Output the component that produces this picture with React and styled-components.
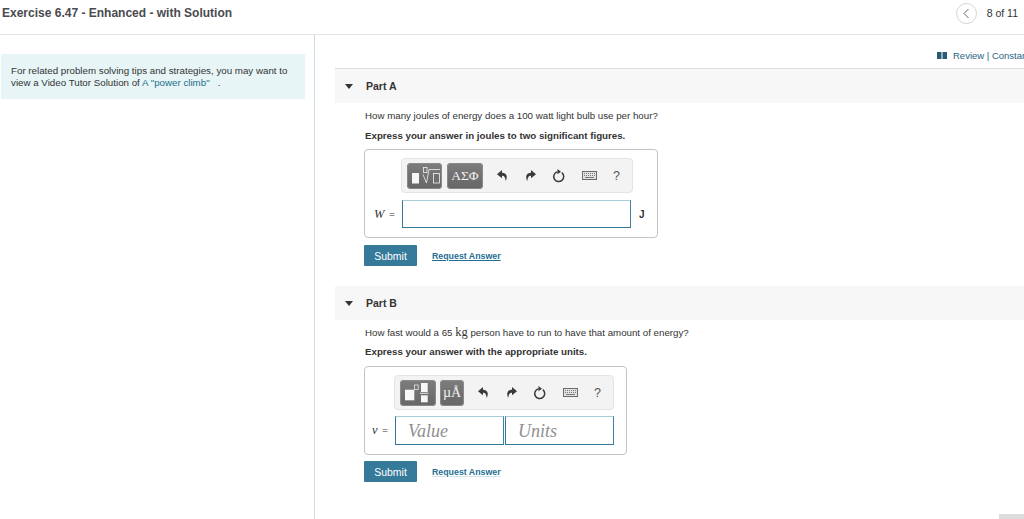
import React from "react";
import styled, { createGlobalStyle } from "styled-components";

const GlobalStyle = createGlobalStyle`
  html, body {
    margin: 0;
    padding: 0;
    height: 100%;
    overflow: hidden;
    background: #fff;
    font-family: "Liberation Sans", Arial, sans-serif;
  }
  * { box-sizing: border-box; }
`;

const Page = styled.div`
  position: relative;
  width: 1024px;
  height: 519px;
  overflow: hidden;
  display: flex;
  flex-direction: column;
`;

const Header = styled.header`
  height: 35px;
  flex-shrink: 0;
  display: flex;
  align-items: center;
  justify-content: space-between;
  padding: 0 6px 8px 2px;
  border-bottom: 1px solid #e3e5e8;
`;

const Title = styled.h1`
  margin: 0;
  font-size: 12px;
  font-weight: 700;
  color: #4a4a4f;
`;

const Pager = styled.div`
  display: flex;
  align-items: center;
  gap: 10px;
  font-size: 10.5px;
  color: #333;
`;

const BackButton = styled.div`
  width: 21px;
  height: 21px;
  border: 1px solid #d4d4d4;
  border-radius: 50%;
  display: flex;
  align-items: center;
  justify-content: center;
`;

const Body = styled.div`
  flex: 1;
  display: flex;
`;

const Sidebar = styled.aside`
  width: 315px;
  flex-shrink: 0;
  padding: 19px 9px 0 1px;
  border-right: 1px solid #ccdbe4;
`;

const InfoBox = styled.div`
  height: 45px;
  padding: 11px 10px 0 10px;
  background: #e7f5f6;
  font-size: 9.75px;
  line-height: 12px;
  white-space: nowrap;
  color: #333;
`;

const InfoLink = styled.span`
  color: #1e6f8e;
`;

const Main = styled.main`
  flex: 1;
  min-width: 0;
  padding-left: 20px;
  overflow: hidden;
`;

const ReviewRow = styled.div`
  height: 34px;
  padding: 15px 0 0 602px;
  display: flex;
  align-items: flex-start;
  gap: 6px;
  white-space: nowrap;
  font-size: 9.5px;
  line-height: 12px;
  color: #2a6480;
  border-bottom: 1px solid #dedede;

  svg {
    flex-shrink: 0;
    margin-top: 2px;
  }
`;

const PartBar = styled.div`
  height: 34px;
  display: flex;
  align-items: center;
  gap: 13px;
  padding-left: 10px;
  background: #f7f7f7;
  font-size: 10.5px;
  font-weight: 700;
  color: #333;
`;

const Caret = styled.span`
  width: 0;
  height: 0;
  border-left: 4.5px solid transparent;
  border-right: 4.5px solid transparent;
  border-top: 5px solid #333;
`;

const PartBody = styled.section`
  padding-left: 29px;
  height: ${(p) => p.$height}px;
`;

const Question = styled.p`
  margin: 0;
  padding: ${(p) => p.$top}px 0 0 1px;
  font-size: 9.73px;
  line-height: 12px;
  color: #333;
`;

const Unit = styled.span`
  font-family: "Liberation Serif", serif;
  font-size: 12.5px;
`;

const Instruction = styled.p`
  margin: 0;
  padding: ${(p) => p.$top}px 0 0 1px;
  font-size: 9.72px;
  line-height: 12px;
  font-weight: 700;
  color: #333;
`;

const AnswerCard = styled.div`
  width: ${(p) => p.$width}px;
  height: 89px;
  margin-top: ${(p) => p.$top}px;
  padding-top: 8px;
  border: 1px solid #c4c4c4;
  border-radius: 4px;
`;

const Toolbar = styled.div`
  width: ${(p) => p.$width}px;
  height: 35px;
  margin-left: ${(p) => p.$left}px;
  padding: 3px 5px;
  display: flex;
  align-items: center;
  background: #f3f3f3;
  border: 1px solid #e4e4e4;
  border-radius: 4px;
`;

const ToolGroup = styled.div`
  display: flex;
  gap: ${(p) => p.$gap}px;
`;

const TemplateButton = styled.div`
  width: ${(p) => p.$width}px;
  height: 26px;
  display: flex;
  align-items: center;
  justify-content: center;
  border-radius: 4px;
  background: linear-gradient(#7d7d7d, #666);
  box-shadow: inset 0 0 0 1px #8a8a8a;
  color: #f2f2f2;
  font-family: "Liberation Serif", serif;
  font-size: ${(p) => p.$size || 13}px;
`;

const ToolIcons = styled.div`
  flex: 1;
  display: flex;
  align-items: center;
  justify-content: space-between;
  padding: 0 7px 0 14px;
`;

const HelpMark = styled.span`
  font-size: 12.5px;
  color: #555;
`;

const InputRow = styled.div`
  display: flex;
  align-items: center;
  margin-top: ${(p) => p.$top}px;
`;

const VarLabel = styled.div`
  width: ${(p) => p.$width}px;
  padding-right: 7px;
  flex-shrink: 0;
  text-align: right;
  white-space: nowrap;
  word-spacing: 2px;
  font-family: "Liberation Serif", serif;
  font-size: 10.5px;
  color: #333;

  i { font-size: 12.5px; }
`;

const MathInput = styled.div`
  width: ${(p) => p.$width}px;
  height: ${(p) => p.$height}px;
  margin-right: ${(p) => p.$gap || 0}px;
  padding: 2px 0 0 12px;
  display: flex;
  align-items: center;
  border: 1px solid #2f7a99;
  border-top-color: #a9cbd8;
  border-right-color: #3d82a0;
  font-family: "Liberation Serif", serif;
  font-style: italic;
  font-size: 18px;
  color: #8f8f8f;
`;

const UnitLabel = styled.div`
  margin-left: 8px;
  font-size: 10px;
  font-weight: 700;
  color: #333;
`;

const ActionRow = styled.div`
  display: flex;
  align-items: center;
  gap: 15px;
  margin-top: ${(p) => p.$top}px;
`;

const SubmitButton = styled.button`
  width: 53px;
  height: 21px;
  padding: 0;
  border: 0;
  border-radius: 1px;
  background: #357a98;
  color: #fff;
  font-family: inherit;
  font-size: 10.5px;
`;

const RequestLink = styled.a`
  font-size: 8.8px;
  font-weight: 700;
  color: #1f6f93;
  text-decoration: underline;
  text-decoration-color: ${(p) => (p.$faint ? "#d4e4ec" : "#1f6f93")};
`;

const ScrollThumb = styled.div`
  position: absolute;
  right: 0;
  bottom: 0;
  width: 25px;
  height: 5px;
  background: #dcdcdc;
`;

const BackIcon = () => (
  <svg width="9" height="11" viewBox="0 0 9 11" fill="none" stroke="#666" strokeWidth="1">
    <path d="M6.5 1 L2 5.5 L6.5 10" />
  </svg>
);

const BookIcon = () => (
  <svg width="10" height="7" viewBox="0 0 10 7" fill="#2a5a78">
    <rect x="0" y="0" width="4.5" height="7" />
    <rect x="5.5" y="0" width="4.5" height="7" />
  </svg>
);

const UndoIcon = ({ flip }) => (
  <svg width="11" height="11" viewBox="0 0 11 10" fill="#3a3a3a" preserveAspectRatio="none" style={flip ? { transform: "scaleX(-1)" } : undefined}>
    <path d="M5 0 L0 3.8 L5 7.4 L5 5.2 C7.2 5 8.2 6.4 8.8 10 C10.8 5.8 9.8 2.4 5 2.4 Z" />
  </svg>
);

const ResetIcon = () => (
  <svg width="13" height="14" viewBox="0 0 13 14" fill="none">
    <path d="M9.8 3.6 A5 5 0 1 1 5.5 2.7" stroke="#3a3a3a" strokeWidth="1.5" />
    <path d="M5.5 0 L9 2.7 L5.5 5.2 Z" fill="#3a3a3a" />
  </svg>
);

const KeyboardIcon = () => (
  <svg width="15" height="9" viewBox="0 0 15 9" fill="none">
    <rect x="0.5" y="0.5" width="14" height="8" fill="#e4e4e4" stroke="#6a6a6a" />
    <path d="M2 2.5 H13 M2 4.5 H13" stroke="#777" strokeDasharray="1 1" />
    <path d="M3 6.5 H12" stroke="#777" />
  </svg>
);

const RootIcon = () => (
  <svg width="35" height="26" viewBox="0 0 35 26" fill="none" stroke="#f2f2f2" strokeWidth="0.8">
    <rect x="5" y="10" width="7" height="10.5" fill="#f7f7f7" stroke="none" />
    <rect x="16.5" y="4.5" width="3.5" height="5" />
    <path d="M16 11.5 L19.5 20 L22 6.5 H33" />
    <rect x="26.5" y="10.5" width="6" height="9.5" />
  </svg>
);

const FractionIcon = () => (
  <svg width="36" height="26" viewBox="0 0 36 26" fill="#f7f7f7">
    <rect x="5" y="9.7" width="9.3" height="10.6" />
    <rect x="14.6" y="5" width="3.6" height="4.4" fill="none" stroke="#f2f2f2" strokeWidth="0.7" />
    <rect x="21" y="3" width="6.7" height="9" />
    <rect x="20" y="12.8" width="8.5" height="0.9" />
    <rect x="21" y="15.3" width="6.7" height="7" />
  </svg>
);

const EditorTools = () => (
  <ToolIcons>
    <UndoIcon />
    <UndoIcon flip />
    <ResetIcon />
    <KeyboardIcon />
    <HelpMark>?</HelpMark>
  </ToolIcons>
);

function App() {
  return (
    <Page>
      <GlobalStyle />
      <Header>
        <Title>Exercise 6.47 - Enhanced - with Solution</Title>
        <Pager>
          <BackButton>
            <BackIcon />
          </BackButton>
          <span>8 of 11</span>
        </Pager>
      </Header>
      <Body>
        <Sidebar>
          <InfoBox>
            For related problem solving tips and strategies, you may want to
            <br />
            view a Video Tutor Solution of <InfoLink>A "power climb"</InfoLink>&nbsp;&nbsp;&nbsp;.
          </InfoBox>
        </Sidebar>
        <Main>
          <ReviewRow>
            <BookIcon />
            <span>Review | Constants</span>
          </ReviewRow>

          <PartBar>
            <Caret />
            Part A
          </PartBar>
          <PartBody $height={183}>
            <Question $top={7}>How many joules of energy does a 100 watt light bulb use per hour?</Question>
            <Instruction $top={8}>Express your answer in joules to two significant figures.</Instruction>
            <AnswerCard $width={294} $top={7}>
              <Toolbar $width={232} $left={36}>
                <ToolGroup $gap={5}>
                  <TemplateButton $width={35}>
                    <RootIcon />
                  </TemplateButton>
                  <TemplateButton $width={36} $size={13.5}>
                    ΑΣΦ
                  </TemplateButton>
                </ToolGroup>
                <EditorTools />
              </Toolbar>
              <InputRow $top={7}>
                <VarLabel $width={37}>
                  <i>W</i> =
                </VarLabel>
                <MathInput $width={229} $height={28} />
                <UnitLabel>J</UnitLabel>
              </InputRow>
            </AnswerCard>
            <ActionRow $top={7}>
              <SubmitButton>Submit</SubmitButton>
              <RequestLink href="#">Request Answer</RequestLink>
            </ActionRow>
          </PartBody>

          <PartBar>
            <Caret />
            Part B
          </PartBar>
          <PartBody $height={180}>
            <Question $top={6}>
              How fast would a 65 <Unit>kg</Unit> person have to run to have that amount of energy?
            </Question>
            <Instruction $top={7}>Express your answer with the appropriate units.</Instruction>
            <AnswerCard $width={263} $top={8}>
              <Toolbar $width={220} $left={29}>
                <ToolGroup $gap={4}>
                  <TemplateButton $width={36}>
                    <FractionIcon />
                  </TemplateButton>
                  <TemplateButton $width={24} $size={14}>
                    µÅ
                  </TemplateButton>
                </ToolGroup>
                <EditorTools />
              </Toolbar>
              <InputRow $top={6}>
                <VarLabel $width={30}>
                  <i>v</i> =
                </VarLabel>
                <MathInput $width={109} $height={29} $gap={1}>
                  Value
                </MathInput>
                <MathInput $width={109} $height={29}>
                  Units
                </MathInput>
              </InputRow>
            </AnswerCard>
            <ActionRow $top={6}>
              <SubmitButton>Submit</SubmitButton>
              <RequestLink href="#" $faint>
                Request Answer
              </RequestLink>
            </ActionRow>
          </PartBody>
        </Main>
      </Body>
      <ScrollThumb />
    </Page>
  );
}

export default App;
